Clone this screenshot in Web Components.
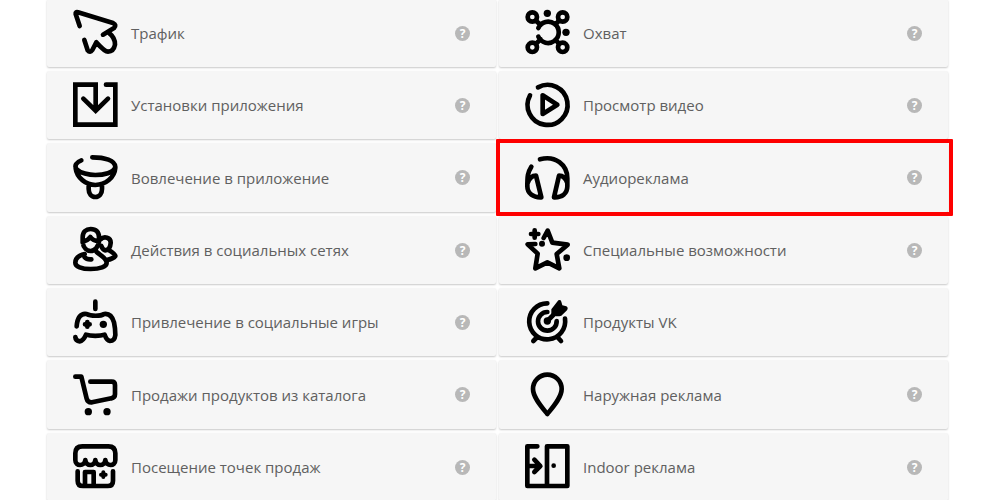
<!DOCTYPE html>
<html lang="ru">
<head>
<meta charset="utf-8">
<title>Цель рекламной кампании</title>
<style>
html, body { margin: 0; background: #fff; }
body { overflow-x: hidden; font-family: "Open Sans", "Noto Sans", sans-serif; font-size: 15px; line-height: 20px; color: #606060; }
</style>
</head>
<body>
<objective-list>
  <objective-card icon="cursor" help>Трафик</objective-card>
  <objective-card icon="reach" help>Охват</objective-card>
  <objective-card icon="install" help>Установки приложения</objective-card>
  <objective-card icon="play" help>Просмотр видео</objective-card>
  <objective-card icon="funnel" help>Вовлечение в приложение</objective-card>
  <objective-card icon="audio" help marked>Аудиореклама</objective-card>
  <objective-card icon="people" help>Действия в социальных сетях</objective-card>
  <objective-card icon="star" help>Специальные возможности</objective-card>
  <objective-card icon="gamepad" help>Привлечение в социальные игры</objective-card>
  <objective-card icon="target">Продукты VK</objective-card>
  <objective-card icon="cart" help>Продажи продуктов из каталога</objective-card>
  <objective-card icon="pin" help>Наружная реклама</objective-card>
  <objective-card icon="store" help>Посещение точек продаж</objective-card>
  <objective-card icon="door" help>Indoor реклама</objective-card>
</objective-list>

<script>
const ICONS = {
  cursor: ['99 30', '<path d="M119 78 107 42Q106 35 114 37L219 69Q231 75 222 84L189 104M206 98Q226 114 225 134Q221 155 204 155Q194 155 169 127L157 150Q150 160 143 151L133 120"/>'],
  install: ['99 246', '<path stroke-linejoin="miter" d="M198 254h28v120H106V254h61v74M130 296l37 36 37-36"/>'],
  funnel: ['99 44', '<path d="M124 60C108 66 103 76 109 86C120 98 148 104 166 104C190 104 222 98 226 80C225 60 194 51 157 51M107 84C110 112 138 134 166 134C196 134 224 112 226 82M146 134v12c0 14 8 24 20 24s20-10 20-24v-12"/>'],
  people: ['99 261', '<path d="M128 308V292C128 276 138 267 152 267C168 267 177 276 177 292V306M130 303Q143 303 151 291Q159 303 176 303M128 306C130 325 142 333 152 333C164 333 175 322 177 304M134 342C116 346 106 356 106 368C106 380 125 387 152 387C180 387 200 380 200 368C198 352 180 346 170 336M134 352Q140 359 154 358M182 298C192 288 213 292 212 309C211 322 205 331 196 331C190 330 186 324 184 318M206 330C216 336 226 342 226 348C220 356 212 358 200 360"/>'],
  gamepad: ['99 42', '<path d="M166 50v22M110 124C112 98 122 84 140 87C152 94 182 94 192 87C210 84 218 98 222 112C225 126 226 136 226 150Q224 168 210 168Q200 166 194 149C180 154 152 154 138 149Q130 168 119 169Q107 168 106 156"/><path d="M142 111v14M135 118h14"/><circle class="f" cx="190" cy="118" r="11"/>'],
  cart: ['99 260', '<path d="M106 274h18l16 66q3 12 16 11l58-12q11-2 11-12v-28q0-10-10-10h-64"/><circle class="f" cx="145" cy="379" r="11"/><circle class="f" cx="201" cy="379" r="11"/>'],
  store: ['99 132', '<path d="M106 160q0-21 21-21h78q21 0 21 21v20C226 200 198 200 196 180C194 200 168 200 166 180C164 200 138 200 136 180C134 200 106 200 106 180zM113 214v28q0 16 16 16h74q16 0 16-16v-28M135 256v-40h26v40"/><path stroke-width="12" d="M190 217v14M183 224h14"/>'],
  reach: ['105 30', '<circle cx="127" cy="51" r="14"/><circle cx="218" cy="51" r="14"/><circle cx="127" cy="142" r="14"/><circle cx="218" cy="142" r="14"/><path d="M145 84A32 32 0 1 1 145 110M138 62l14 13M207 62l-11 12M138 131l14-13M207 131l-11-12"/><circle class="f" cx="172" cy="40" r="11"/><circle class="f" cx="228" cy="97" r="11"/>'],
  play: ['105 246', '<path d="M144 262A60 60 0 1 1 120 286M158 286v56l44-28z"/>'],
  audio: ['105 56', '<path d="M150 69C196 56 232 86 232 126v24C232 172 216 184 192 183L207 118C220 118 228 128 232 140M124 91C113 108 112 120 112 150C112 172 130 184 154 183L138 118C126 118 117 128 113 140"/>'],
  star: ['105 273', '<path d="M161 306 173 284 187 320 233 326 200 354 208 397 172 379 136 397 143 353 113 325 136 324"/><circle class="f" cx="156" cy="323" r="9"/><circle class="f" cx="230" cy="365" r="10"/><path d="M134 283v22M123 294h22"/>'],
  target: ['105 42', '<path d="M172 55A54 54 0 1 0 225 101M172 81A28 28 0 1 0 200 108M172 108l28-28M130 168l12-12M213 168l-11-12"/><path class="f" d="M184 89V73L205 46Q213 42 214 50L217 61L229 64Q236 68 231 76L214 92Q202 96 194 92z"/><circle class="f" cx="172" cy="108" r="11"/>'],
  pin: ['105 260', '<path d="M172 386C154 364 129 336 129 311a43 43 0 0 1 86 0C215 336 190 364 172 386z"/>'],
  door: ['105 132', '<path d="M142 139h-30v119h120V139h-61v119M112 198h38M133 179l18 19-18 18"/><circle class="f" cx="191" cy="197" r="7"/>']
};

function attach(el, html) {
  const tpl = document.createElement('template');
  tpl.innerHTML = html;
  el.attachShadow({ mode: 'open' }).append(tpl.content.cloneNode(true));
}

class ObjectiveIcon extends HTMLElement {
  connectedCallback() {
    if (this.shadowRoot) return;
    const [origin, shapes] = ICONS[this.getAttribute('name')];
    attach(this, `<style>
      :host { display: block; width: 44px; height: 44px; }
      svg { display: block; width: 100%; height: 100%; overflow: visible; fill: none; stroke: #000; stroke-linecap: round; stroke-linejoin: round; }
      .f { fill: #000; stroke: none; }
    </style><svg viewBox="${origin} 132 132" stroke-width="14" aria-hidden="true">${shapes}</svg>`);
  }
}

class HelpButton extends HTMLElement {
  connectedCallback() {
    if (this.shadowRoot) return;
    attach(this, `<style>
      :host { display: block; }
      button { display: grid; place-items: center; width: 15px; height: 15px; padding: 0; border: 0; border-radius: 50%; background: #b8b8b8; color: #fff; font: bold 12px/15px "Open Sans", sans-serif; cursor: help; }
    </style><button type="button" title="Справка">?</button>`);
  }
}

class ObjectiveCard extends HTMLElement {
  connectedCallback() {
    if (this.shadowRoot) return;
    attach(this, `<style>
      :host { position: relative; display: flex; align-items: center; padding-right: 26px; background: #f6f6f6; border-radius: 2px; box-shadow: 0 1px 2px rgba(0, 0, 0, .22); }
      .pick { flex: 1; align-self: stretch; display: flex; align-items: center; gap: 14px; padding: 0 0 0 26px; border: 0; background: none; color: inherit; font: inherit; text-align: left; cursor: pointer; }
      objective-icon { margin-bottom: 2px; }
      :host([marked])::after { content: ""; position: absolute; inset: -4px -5px -4px -3px; border: 4px solid #fe0000; border-radius: 1px; pointer-events: none; z-index: 1; }
    </style>
    <button type="button" class="pick"><objective-icon name="${this.getAttribute('icon')}"></objective-icon><span><slot></slot></span></button>
    ${this.hasAttribute('help') ? '<help-button></help-button>' : ''}`);
  }
}

class ObjectiveList extends HTMLElement {
  connectedCallback() {
    if (this.shadowRoot) return;
    attach(this, `<style>
      :host { display: grid; grid-template-columns: 1fr 1fr; grid-auto-rows: 68px 68px 69px; gap: 4px 3px; margin: -1px 52px 0 47px; }
    </style><slot></slot>`);
  }
}

customElements.define('objective-icon', ObjectiveIcon);
customElements.define('help-button', HelpButton);
customElements.define('objective-card', ObjectiveCard);
customElements.define('objective-list', ObjectiveList);
</script>
</body>
</html>
